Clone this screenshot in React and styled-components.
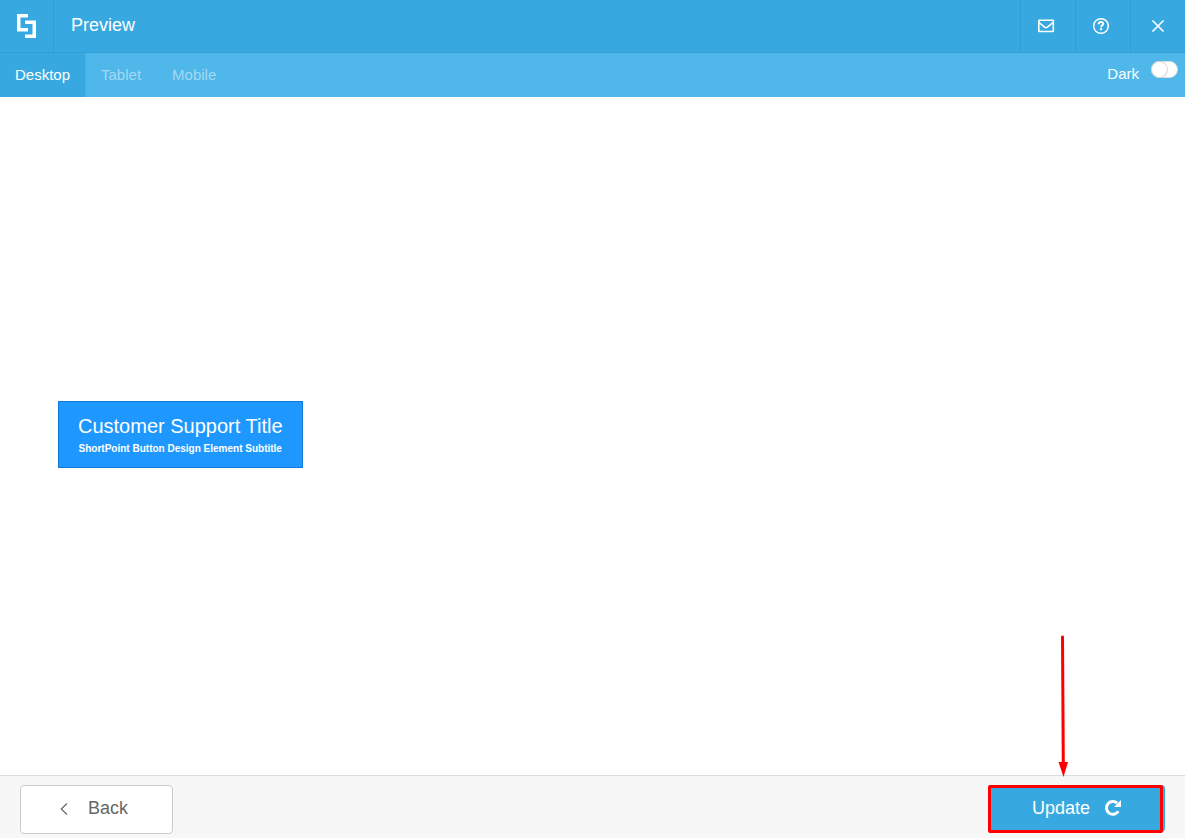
import React, { useState } from 'react'
import styled, { createGlobalStyle } from 'styled-components';

const tabs = ['Desktop', 'Tablet', 'Mobile']

const App = () => {

  const [activeTab, setActiveTab] = useState('Desktop')
  const [dark, setDark] = useState(false)

  return (
    <Page>
      <GlobalStyle />
      <Header>
        <Logo href="#" aria-label="Home">
          <svg width="19" height="24" viewBox="0 0 19 24" fill="none" stroke="#fff" strokeWidth="3.5">
            <path d="M11 1.75H1.75V15.75H11" />
            <path d="M8 8.25H17.25V22.25H8" />
          </svg>
        </Logo>
        <Title>Preview</Title>
        <HeaderButton aria-label="Messages">
          <svg width="18" height="14" viewBox="0 0 18 14" fill="none" stroke="#fff" strokeWidth="1.6">
            <rect x="1.8" y="1.3" width="14.5" height="11.2" rx="0.5" />
            <path d="M2 3.5L7.6 8.2Q9 9.3 10.4 8.2L16 3.5" />
          </svg>
        </HeaderButton>
        <HeaderButton aria-label="Help">
          <svg width="18" height="18" viewBox="0 0 18 18" fill="none" stroke="#fff">
            <circle cx="9" cy="9" r="7.3" strokeWidth="1.5" />
            <path d="M6.6 7.2C6.8 4.2 11.4 4.5 11.2 7C11.1 8.4 9.1 8.4 9.1 10.3" strokeWidth="1.9" />
            <path d="M9.1 11.2V13.2" strokeWidth="2" />
          </svg>
        </HeaderButton>
        <HeaderButton $last aria-label="Close">
          <svg width="14" height="14" viewBox="0 0 14 14" fill="none" stroke="#fff" strokeWidth="1.6">
            <path d="M1.5 1.5L12.5 12.5M12.5 1.5L1.5 12.5" />
          </svg>
        </HeaderButton>
      </Header>

      <TabBar>
        {tabs.map(tab => (
          <Tab key={tab} $active={tab === activeTab} onClick={() => setActiveTab(tab)}>{tab}</Tab>
        ))}
        <DarkLabel htmlFor="dark">Dark</DarkLabel>
        <Switch id="dark" type="checkbox" checked={dark} onChange={() => setDark(!dark)} />
      </TabBar>

      <Canvas $dark={dark}>
        <DesignButton>
          <ButtonTitle>Customer Support Title</ButtonTitle>
          <ButtonSubtitle>ShortPoint Button Design Element Subtitle</ButtonSubtitle>
        </DesignButton>
      </Canvas>

      <Footer>
        <BackButton>
          <svg width="8" height="12" viewBox="0 0 8 12" fill="none" stroke="#666" strokeWidth="1.2">
            <path d="M7 0.5L1.2 6L7 11.5" />
          </svg>
          Back
        </BackButton>
        <UpdateArea>
          <UpdateButton>
            Update
            <svg width="18" height="18" viewBox="0 0 18 18" fill="none">
              <path d="M14.3 12.3A6.4 6.4 0 1 1 13.2 4.2" stroke="#fff" strokeWidth="3" />
              <path d="M17 1V8H10Z" fill="#fff" />
            </svg>
          </UpdateButton>
          <Highlight />
          <Arrow width="12" height="142" viewBox="0 0 12 142">
            <path d="M5.5 2L6.3 130" stroke="#f00" strokeWidth="3" strokeLinecap="round" />
            <path d="M1.5 127H11L6.5 142Z" fill="#f00" />
          </Arrow>
        </UpdateArea>
      </Footer>
    </Page>
  )
}

const GlobalStyle = createGlobalStyle`
  * {
    box-sizing: border-box;
  }
  body {
    margin: 0;
    font-family: "Liberation Sans", Arial, sans-serif;
  }
  button {
    font-family: inherit;
    cursor: pointer;
  }
  svg {
    display: block;
    flex: none;
  }
`
const Page = styled.div`
  display: flex;
  flex-direction: column;
  min-height: 100vh;
`
const Header = styled.header`
  display: flex;
  height: 53px;
  background: #37a8e0;
  border-bottom: 1px solid #2e9fd9;
`
const Logo = styled.a`
  display: flex;
  align-items: center;
  justify-content: center;
  width: 54px;
  border-right: 1px solid #2f9fd8;
`
const Title = styled.h1`
  flex: 1;
  margin: 0;
  padding-left: 17px;
  color: #fff;
  font-size: 18px;
  font-weight: normal;
  line-height: 50px;
`
const HeaderButton = styled.button`
  display: flex;
  align-items: center;
  justify-content: center;
  width: 55px;
  padding: 0 ${props => props.$last ? '0' : '5px'} 0 0;
  background: none;
  border: 0;
  border-left: 1px solid #2f9fd8;
`
const TabBar = styled.nav`
  display: flex;
  height: 44px;
  padding-right: 7px;
  background: #4fb7ea;
`
const Tab = styled.button`
  padding: 0 15px 2px;
  border: 0;
  border-right: 1px solid ${props => props.$active ? '#45b0e5' : 'transparent'};
  background: ${props => props.$active ? '#37a8e0' : 'none'};
  color: ${props => props.$active ? '#fff' : '#a2d9f5'};
  font-size: 15px;
`
const DarkLabel = styled.label`
  margin-left: auto;
  padding-right: 12px;
  color: #fff;
  font-size: 15px;
  line-height: 42px;
`
const Switch = styled.input`
  appearance: none;
  width: 27px;
  height: 17px;
  margin: 8px 0 0;
  border: 1px solid #ddd;
  border-radius: 9px;
  background: #fff;
  cursor: pointer;

  &::before {
    content: '';
    display: block;
    width: 15px;
    height: 15px;
    margin-left: ${props => props.checked ? '10px' : '0'};
    border-radius: 8px;
    background: #fff;
    box-shadow: 0 0 0 1px #d5d5d5;
  }
`
const Canvas = styled.main`
  display: flex;
  flex: 1;
  align-items: center;
  padding: 0 58px 3px;
  background: ${props => props.$dark ? '#333' : '#fff'};
`
const DesignButton = styled.button`
  padding: 11px 19px 10px;
  border: 1px solid #0f7ad8;
  background: #1e98ff;
  color: #fff;
`
const ButtonTitle = styled.span`
  display: block;
  font-size: 20px;
  line-height: 26px;
`
const ButtonSubtitle = styled.span`
  display: block;
  padding-top: 2px;
  font-size: 10px;
  font-weight: bold;
  line-height: 16px;
`
const Footer = styled.footer`
  display: flex;
  justify-content: space-between;
  padding: 9px 20px 4px;
  border-top: 1px solid #ddd;
  background: #f7f7f7;
`
const BackButton = styled.button`
  display: flex;
  align-items: center;
  gap: 20px;
  height: 49px;
  padding: 0 44px 2px 39px;
  border: 1px solid #ccc;
  border-radius: 4px;
  background: #fff;
  color: #666;
  font-size: 18px;
`
const UpdateArea = styled.div`
  position: relative;
`
const UpdateButton = styled.button`
  display: flex;
  align-items: center;
  gap: 14px;
  height: 47px;
  padding: 0 43px 1px 44px;
  border: 0;
  border-radius: 4px;
  background: #37a8e0;
  color: #fff;
  font-size: 18px;
`
const Highlight = styled.div`
  position: absolute;
  top: 0;
  left: 0;
  right: 2px;
  height: 48px;
  border: 3px solid #f00;
  border-radius: 2px;
  pointer-events: none;
`
const Arrow = styled.svg`
  position: absolute;
  right: 96px;
  bottom: 57px;
  pointer-events: none;
`

export default App
